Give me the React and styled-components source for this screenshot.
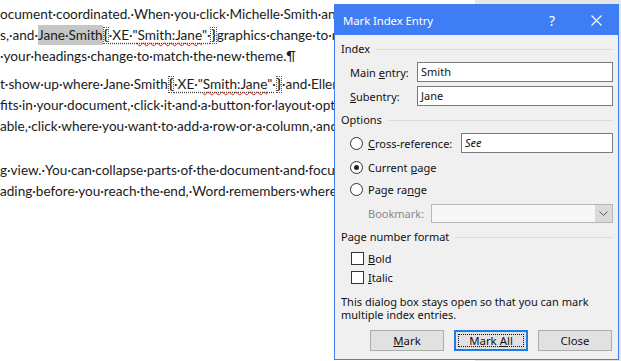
import styled, { createGlobalStyle } from "styled-components";

const Global = createGlobalStyle`
  html, body { margin: 0; padding: 0; }
  body {
    background: #e6e6e6;
    width: 621px;
    height: 361px;
    overflow: hidden;
    position: relative;
  }
`;

// ---- document behind the dialog ----
const Page = styled.div`
  width: 475px;
  height: 361px;
  background: #fff;
  padding-top: 4px;
  box-sizing: border-box;
  font-family: Lato, "Liberation Sans", sans-serif;
  font-size: 13.6px;
  color: #1b1b1b;
`;

// only the part left of the dialog is visible
const TextColumn = styled.div`
  width: 334px;
  overflow: hidden;
`;

const Paragraph = styled.div`
  margin-top: ${(p) => p.top || 0}px;
`;

const Line = styled.div`
  white-space: nowrap;
  line-height: 21px;
  height: 21px;
`;

const Highlight = styled.span`
  background: #c6c6c6;
  padding: 2px 0;
`;

const FieldBrace = styled.span`
  display: inline-block;
  border: 1px dotted #555;
  font-weight: 700;
  line-height: 15px;
  padding: 0;
`;

const Hidden = styled.span`
  text-decoration: underline dotted #444;
  text-underline-offset: 3px;
`;

const Misspelled = styled.span`
  text-decoration: underline wavy #e0201a;
  text-decoration-thickness: 1px;
  text-underline-offset: 2px;
`;

const XE = () => (
  <>
    <FieldBrace>{"{"}</FieldBrace>
    <Hidden>
      ·XE·"<Misspelled>Smith:Jane</Misspelled>"·
    </Hidden>
    <FieldBrace>{"}"}</FieldBrace>
  </>
);

// ---- dialog ----
const Dialog = styled.div`
  position: absolute;
  left: 334px;
  top: 4px;
  width: 285px;
  box-sizing: border-box;
  border: 1px solid #3f7df4;
  background: #f0f0f0;
  font-family: "Noto Sans", "Open Sans", sans-serif;
  font-size: 11px;
  color: #111;
`;

const TitleBar = styled.div`
  height: 30px;
  background: #3f7df4;
  color: #fff;
  display: flex;
  align-items: center;
  padding: 0 0 0 8px;
  font-size: 11.4px;
  letter-spacing: -0.1px;
`;

const Title = styled.div`
  flex: 1;
`;

const TitleButton = styled.div`
  width: 44px;
  height: 30px;
  display: flex;
  align-items: center;
  justify-content: center;
  font-size: 14px;
`;

const Body = styled.div`
  padding: 6px 5px 8px 6px;
  display: flex;
  flex-direction: column;
`;

const Legend = styled.div`
  display: flex;
  align-items: center;
  gap: 6px;
  height: 16px;
  line-height: 16px;
  margin-top: ${(p) => p.top || 0}px;
  &::after {
    content: "";
    flex: 1;
    height: 1px;
    background: #dcdcdc;
  }
`;

const FieldRow = styled.div`
  display: grid;
  grid-template-columns: 67px 1fr;
  align-items: center;
  margin-left: 9px;
  margin-top: ${(p) => p.top || 0}px;
`;

const TextBox = styled.div`
  height: 20px;
  box-sizing: border-box;
  border: 1px solid #7a7a7a;
  background: #fff;
  padding-left: 3px;
  line-height: 18px;
  font-style: ${(p) => (p.italic ? "italic" : "normal")};
`;

const OptionRow = styled.div`
  display: flex;
  align-items: center;
  height: ${(p) => p.h || 22}px;
  margin-left: 9px;
  margin-top: ${(p) => p.top || 0}px;
`;

const Radio = styled.span`
  width: 13px;
  height: 13px;
  box-sizing: border-box;
  border: 1px solid #333;
  border-radius: 50%;
  background: #fff;
  display: flex;
  align-items: center;
  justify-content: center;
  margin-right: 5px;
  &::after {
    content: "";
    width: 5px;
    height: 5px;
    border-radius: 50%;
    background: ${(p) => (p.checked ? "#222" : "transparent")};
  }
`;

const CheckBox = styled.span`
  width: 13px;
  height: 13px;
  box-sizing: border-box;
  border: 1px solid #333;
  background: #fff;
  margin-right: 4px;
`;

const OptionText = styled.span`
  width: ${(p) => (p.w ? p.w + "px" : "auto")};
`;

const Grow = styled.div`
  flex: 1;
`;

const BookmarkRow = styled.div`
  display: flex;
  align-items: center;
  margin: 4px 0 0 27px;
  color: #8a8a8a;
`;

const BookmarkLabel = styled.span`
  width: 63px;
`;

const Select = styled.div`
  flex: 1;
  height: 19px;
  box-sizing: border-box;
  border: 1px solid #b7b7b7;
  background: #f7f7f7;
  display: flex;
  justify-content: flex-end;
`;

const SelectButton = styled.div`
  width: 17px;
  background: #dadada;
  display: flex;
  align-items: center;
  justify-content: center;
`;

const CheckRow = styled.div`
  display: flex;
  align-items: center;
  height: 19px;
  margin-left: 10px;
  margin-top: ${(p) => p.top || 0}px;
`;

const Note = styled.div`
  margin-top: 8px;
  line-height: 13px;
`;

const Buttons = styled.div`
  display: flex;
  justify-content: flex-end;
  gap: 10px;
  margin: 9px 1px 0 0;
`;

const Button = styled.div`
  width: 74px;
  height: 21px;
  box-sizing: border-box;
  background: #e1e1e1;
  border: 1px solid ${(p) => (p.primary ? "#1f7be8" : "#adadad")};
  box-shadow: ${(p) => (p.primary ? "inset 0 0 0 1px #1f7be8" : "none")};
  display: flex;
  align-items: center;
  justify-content: center;
  position: relative;
  font-size: 11.4px;
  &::after {
    content: "";
    position: absolute;
    inset: 3px;
    border: 1px dotted ${(p) => (p.primary ? "#111" : "transparent")};
  }
`;

export default function App() {
  return (
    <>
      <Global />
      <Page>
        <TextColumn>
          <Paragraph>
            <Line>ocument·coordinated.·When·you·click·Michelle·Smith·and·</Line>
            <Line>
              s,·and·<Highlight>Jane·Smith</Highlight>
              <XE />
              graphics·change·to·match
            </Line>
            <Line>·your·headings·change·to·match·the·new·theme.¶</Line>
          </Paragraph>
          <Paragraph top={7}>
            <Line>
              t·show·up·where·Jane·Smith
              <XE />
              ·and·Ellen·Adams
            </Line>
            <Line>fits·in·your·document,·click·it·and·a·button·for·layout·options</Line>
            <Line>able,·click·where·you·want·to·add·a·row·or·a·column,·and·then</Line>
          </Paragraph>
          <Paragraph top={23}>
            <Line>g·view.·You·can·collapse·parts·of·the·document·and·focus·on</Line>
            <Line>ading·before·you·reach·the·end,·Word·remembers·where·you</Line>
          </Paragraph>
        </TextColumn>
      </Page>

      <Dialog>
        <TitleBar>
          <Title>Mark Index Entry</Title>
          <TitleButton>?</TitleButton>
          <TitleButton>
            <svg width="11" height="11" viewBox="0 0 11 11">
              <path d="M0.5 0.5 L10.5 10.5 M10.5 0.5 L0.5 10.5" stroke="#fff" strokeWidth="1.1" />
            </svg>
          </TitleButton>
        </TitleBar>
        <Body>
          <Legend>Index</Legend>
          <FieldRow top={5}>
            <span>
              Main <u>e</u>ntry:
            </span>
            <TextBox>Smith</TextBox>
          </FieldRow>
          <FieldRow top={4}>
            <span>
              <u>S</u>ubentry:
            </span>
            <TextBox>Jane</TextBox>
          </FieldRow>

          <Legend top={6}>Options</Legend>
          <OptionRow top={5} h={20}>
            <Radio />
            <OptionText w={93}>
              <u>C</u>ross-reference:
            </OptionText>
            <Grow>
              <TextBox italic>See</TextBox>
            </Grow>
          </OptionRow>
          <OptionRow top={3}>
            <Radio checked />
            <OptionText>
              Current <u>p</u>age
            </OptionText>
          </OptionRow>
          <OptionRow>
            <Radio />
            <OptionText>
              Page ra<u>n</u>ge
            </OptionText>
          </OptionRow>
          <BookmarkRow>
            <BookmarkLabel>Bookmark:</BookmarkLabel>
            <Select>
              <SelectButton>
                <svg width="9" height="5" viewBox="0 0 9 5">
                  <path d="M0.5 0.5 L4.5 4.5 L8.5 0.5" fill="none" stroke="#555" strokeWidth="1" />
                </svg>
              </SelectButton>
            </Select>
          </BookmarkRow>

          <Legend top={6}>Page number format</Legend>
          <CheckRow top={4}>
            <CheckBox />
            <span>
              <u>B</u>old
            </span>
          </CheckRow>
          <CheckRow>
            <CheckBox />
            <span>
              <u>I</u>talic
            </span>
          </CheckRow>

          <Note>
            This dialog box stays open so that you can mark
            <br />
            multiple index entries.
          </Note>

          <Buttons>
            <Button>
              <span>
                <u>M</u>ark
              </span>
            </Button>
            <Button primary>
              <span>
                Mark <u>A</u>ll
              </span>
            </Button>
            <Button>Close</Button>
          </Buttons>
        </Body>
      </Dialog>
    </>
  );
}
